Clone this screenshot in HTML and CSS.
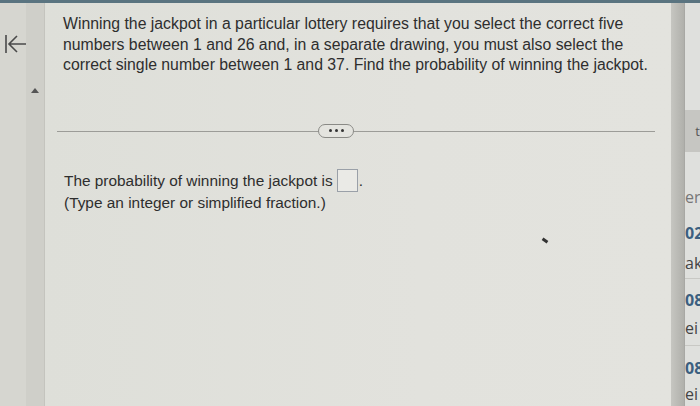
FILE: index.html
```html
<!DOCTYPE html>
<html>
<head>
<meta charset="utf-8">
<link rel="stylesheet" href="styles.css">
</head>
<body>
<div class="topbar"></div>
<div class="screen">
  <aside class="side">
    <div class="side-nav">
      <svg class="back" width="24" height="22" viewBox="0 0 24 22">
        <path d="M2 2 V20 M22 11 H6 M13 3 L5 11 L13 19" fill="none" stroke="#4a4a4a" stroke-width="1.6"/>
      </svg>
    </div>
    <div class="side-col">
      <span class="tri"></span>
    </div>
  </aside>
  <main class="main">
    <p class="question">Winning the jackpot in a particular lottery requires that you select the correct five numbers between 1 and 26 and, in a separate drawing, you must also select the correct single number between 1 and 37. Find the probability of winning the jackpot.</p>
    <div class="sep">
      <span class="more"><i></i><i></i><i></i></span>
    </div>
    <div class="answer">
      <p class="line">The probability of winning the jackpot is <span class="box"></span>.</p>
      <p class="line">(Type an integer or simplified fraction.)</p>
    </div>
    <span class="cursor"></span>
  </main>
  <div class="band"></div>
  <aside class="panel">
    <div class="pblock"><span class="pt">t</span></div>
    <div class="pitem dim i1">er</div>
    <div class="pitem blue i2">02</div>
    <div class="pitem i3">ak</div>
    <div class="pitem blue gap i4">08</div>
    <div class="pitem i5">ei</div>
    <div class="pitem blue gap i6">08-</div>
    <div class="pitem i7">ei I</div>
  </aside>
</div>
</body>
</html>
```
FILE: styles.css
```css
html, body {
  margin: 0;
  padding: 0;
  width: 700px;
  height: 406px;
  overflow: hidden;
  background: #dcdcd6;
  font-family: "Liberation Sans", Arial, sans-serif;
}
.topbar {
  height: 3px;
  background: #5a7480;
}
.screen {
  display: flex;
  height: 403px;
}
.side {
  display: flex;
  width: 45px;
  flex: none;
}
.side-nav {
  width: 26px;
  background: #d6d6d0;
  padding-top: 30px;
  padding-left: 4px;
  box-sizing: border-box;
}
.back { display: block; }
.side-col {
  width: 19px;
  background: #cfcfc9;
  border-right: 1px solid #c4c4be;
  padding-top: 85px;
  display: flex;
  justify-content: center;
  box-sizing: border-box;
}
.tri {
  width: 0;
  height: 0;
  border-left: 4px solid transparent;
  border-right: 4px solid transparent;
  border-bottom: 5px solid #555;
}
.main {
  position: relative;
  width: 626px;
  flex: none;
  background: linear-gradient(90deg, #dedfd9 0%, #e2e2dd 60%, #e3e3de 100%);
  padding: 0 0 0 18px;
  box-sizing: border-box;
}
.question {
  margin: 11px 0 0 0;
  width: 600px;
  font-size: 15.8px;
  line-height: 20.5px;
  color: #2e2e2e;
}
.sep {
  position: relative;
  margin: 55px 16px 0 -6px;
  height: 1px;
  background: #9c9c98;
}
.more {
  position: absolute;
  top: -7px;
  left: 261px;
  width: 34px;
  height: 12px;
  border: 1px solid #8a8a86;
  border-radius: 7px;
  background: #e4e4df;
  display: flex;
  justify-content: center;
  align-items: center;
  gap: 3px;
}
.more i {
  width: 3px;
  height: 3px;
  background: #333;
  border-radius: 50%;
}
.answer {
  margin-top: 37px;
  padding-left: 1px;
}
.line {
  margin: 0;
  font-size: 15.4px;
  line-height: 21px;
  color: #2e2e2e;
  display: flex;
  align-items: center;
}
.box {
  display: inline-block;
  width: 19px;
  height: 21px;
  border: 1px solid #9aa0a8;
  background: #eaeae6;
  margin-left: 4px;
  margin-right: 1px;
}
.cursor {
  position: absolute;
  left: 497px;
  top: 236px;
  width: 6px;
  height: 3px;
  background: #333;
  transform: rotate(35deg);
}
.band {
  width: 13px;
  flex: none;
  background: linear-gradient(90deg, #c6c6c1, #b0b0ab);
}
.panel {
  flex: 1;
  background: #dfe0dd;
  border-left: 1px solid #a8a8a4;
  overflow: hidden;
  font-family: "Open Sans", "DejaVu Sans", sans-serif;
  font-size: 16px;
  white-space: nowrap;
}
.pblock {
  margin-top: 107px;
  height: 42px;
  background: #c6c6c2;
  text-align: right;
  font-size: 13px;
  line-height: 42px;
  color: #555;
}
.pitem {
  color: #444;
  line-height: 18px;
}
.pitem.blue { color: #3b5f80; font-weight: bold; }
.pitem.gap { border-top: 1px solid #c8c8c4; }
.i1 { color: #777; margin-top: 36px; }
.i2 { margin-top: 18px; }
.i3 { margin-top: 12px; }
.i4 { margin-top: 6px; padding-top: 12px; }
.i5 { margin-top: 10px; }
.i6 { margin-top: 8px; padding-top: 13px; }
.i7 { margin-top: 8px; }
```
